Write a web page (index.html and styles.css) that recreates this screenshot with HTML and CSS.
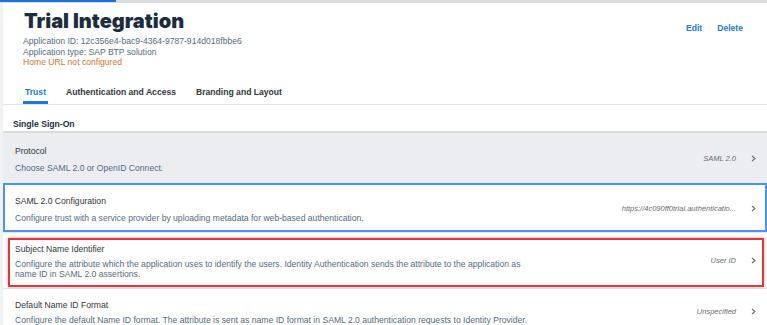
FILE: index.html
```html
<!DOCTYPE html>
<html lang="en">
<head>
<meta charset="utf-8">
<title>Trial Integration</title>
<link rel="stylesheet" href="styles.css">
</head>
<body>
<div class="topbar"><div class="topbar-fill"></div></div>
<div class="page">
  <header class="obj-header">
    <div class="head-row">
      <div class="head-main">
        <h1 class="title">Trial Integration</h1>
        <div class="meta">Application ID: 12c356e4-bac9-4364-9787-914d018fbbe6</div>
        <div class="meta">Application type: SAP BTP solution</div>
        <div class="meta warn">Home URL not configured</div>
      </div>
      <div class="actions">
        <a class="action" href="#">Edit</a>
        <a class="action" href="#">Delete</a>
      </div>
    </div>
    <nav class="tabs">
      <a class="tab active" href="#">Trust</a>
      <a class="tab" href="#">Authentication and Access</a>
      <a class="tab" href="#">Branding and Layout</a>
    </nav>
  </header>

  <section class="section">
    <h2 class="section-title">Single Sign-On</h2>
    <ul class="list">
      <li class="item hovered">
        <div class="text">
          <div class="item-title">Protocol</div>
          <div class="item-desc">Choose SAML 2.0 or OpenID Connect.</div>
        </div>
        <span class="value">SAML 2.0</span>
        <svg class="chev" width="5" height="7" viewBox="0 0 5 7"><polyline points="1,1 4,3.5 1,6" fill="none" stroke="#6a6d70" stroke-width="1.1"/></svg>
      </li>
      <li class="item focused">
        <div class="text">
          <div class="item-title">SAML 2.0 Configuration</div>
          <div class="item-desc">Configure trust with a service provider by uploading metadata for web-based authentication.</div>
        </div>
        <span class="value">https://4c090ff0trial.authenticatio...</span>
        <svg class="chev" width="5" height="7" viewBox="0 0 5 7"><polyline points="1,1 4,3.5 1,6" fill="none" stroke="#6a6d70" stroke-width="1.1"/></svg>
      </li>
      <li class="item flagged">
        <div class="text">
          <div class="item-title">Subject Name Identifier</div>
          <div class="item-desc">Configure the attribute which the application uses to identify the users. Identity Authentication sends the attribute to the application as name ID in SAML 2.0 assertions.</div>
        </div>
        <span class="value">User ID</span>
        <svg class="chev" width="5" height="7" viewBox="0 0 5 7"><polyline points="1,1 4,3.5 1,6" fill="none" stroke="#6a6d70" stroke-width="1.1"/></svg>
      </li>
      <li class="item">
        <div class="text">
          <div class="item-title">Default Name ID Format</div>
          <div class="item-desc">Configure the default Name ID format. The attribute is sent as name ID format in SAML 2.0 authentication requests to Identity Provider.</div>
        </div>
        <span class="value">Unspecified</span>
        <svg class="chev" width="5" height="7" viewBox="0 0 5 7"><polyline points="1,1 4,3.5 1,6" fill="none" stroke="#6a6d70" stroke-width="1.1"/></svg>
      </li>
    </ul>
  </section>
</div>
</body>
</html>
```

FILE: styles.css
```css
* { box-sizing: border-box; }

html, body {
  margin: 0;
  padding: 0;
  height: 100%;
  overflow: hidden;
}

body {
  background: #f1f2f4;
  font-family: "Liberation Sans", Arial, sans-serif;
  font-size: 8.6px;
  color: #32363a;
}

.topbar {
  height: 3px;
  background: #dcdde0;
}

.topbar-fill {
  width: 116px;
  height: 2px;
  background: #1b73d7;
}

.page {
  margin-left: 3px;
  background: #fff;
  min-height: 100%;
}

.obj-header {
  padding: 6px 24px 0 20px;
  border-bottom: 1px solid #e4e5e7;
}

.head-row {
  display: flex;
  justify-content: space-between;
  align-items: flex-start;
}

.title {
  margin: 0 0 0 1px;
  font-family: Inter, Lato, "Liberation Sans", sans-serif;
  font-weight: 900;
  font-size: 20px;
  line-height: 24px;
  color: #1d2d3e;
}

.meta {
  line-height: 10.5px;
  color: #556b82;
}

.title + .meta { margin-top: 3px; }

.meta.warn { color: #d2772f; }

.actions {
  display: flex;
  gap: 15px;
  padding-top: 13px;
  line-height: 12px;
}

.action {
  color: #1f78d8;
  font-weight: bold;
  text-decoration: none;
}

.tabs {
  display: flex;
  gap: 16px;
  margin-top: 10px;
}

.tab {
  padding: 8px 2px 3.5px;
  line-height: 12px;
  font-weight: bold;
  color: #32363a;
  text-decoration: none;
  border-bottom: 3px solid transparent;
}

.tab.active {
  color: #1f78d8;
  border-bottom-color: #1f78d8;
}

.section-title {
  margin: 0;
  padding: 13px 10px 1px;
  font-size: 8.6px;
  line-height: 12px;
  font-weight: bold;
  color: #1d2d3e;
}

.list {
  list-style: none;
  margin: 0;
  padding: 0;
  border-top: 2px solid #d9dbde;
}

.item {
  position: relative;
  display: flex;
  align-items: center;
  padding: 9px 11px 9px 12px;
  border-bottom: 1px solid #e5e6e8;
}

.item.hovered,
.item.focused {
  padding-top: 11px;
}

.item.hovered {
  background: #ebedf0;
  border-bottom-color: #ebedf0;
}

.item.focused {
  box-shadow: inset 0 0 0 2px #4a95e8;
}

.item.flagged::after {
  content: "";
  position: absolute;
  left: 5px;
  right: 3px;
  top: 5px;
  bottom: 1px;
  border: 2px solid #e3353d;
  box-shadow: 0 0 3px rgba(227, 53, 61, 0.45);
  pointer-events: none;
}

.text {
  flex: 1;
  max-width: 515px;
}

.item-title {
  line-height: 14px;
  color: #32363a;
}

.item-desc {
  margin-top: 3px;
  line-height: 10px;
  color: #556b82;
}

.item.hovered .item-desc,
.item.focused .item-desc {
  margin-top: 5px;
}

.value {
  margin-left: auto;
  font-size: 7.5px;
  font-style: italic;
  color: #6a6d70;
  white-space: nowrap;
}

.chev {
  display: block;
  margin-left: 15px;
  flex: none;
}
```
